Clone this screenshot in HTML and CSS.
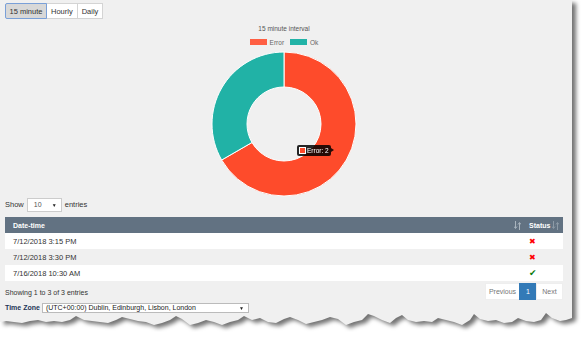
FILE: index.html
```html
<!DOCTYPE html>
<html>
<head>
<meta charset="utf-8">
<link rel="stylesheet" href="styles.css">
</head>
<body>
<div class="shadow">
  <div class="page">
    <div class="btn-group">
      <button class="btn active">15 minute</button><button class="btn">Hourly</button><button class="btn">Daily</button>
    </div>
    <div class="chart">
      <div class="chart-title">15 minute interval</div>
      <div class="legend">
        <span class="legend-item"><span class="swatch err"></span>Error</span>
        <span class="legend-item"><span class="swatch ok"></span>Ok</span>
      </div>
      <div class="donut-wrap">
        <svg class="donut" width="150" height="150" viewBox="0 0 150 150">
          <path d="M75,3 A72,72 0 1,1 12.65,111 L42.96,93.5 A37,37 0 1,0 75,38 Z" fill="#fe4b2b" stroke="#fff" stroke-width="1"/>
          <path d="M12.65,111 A72,72 0 0,1 75,3 L75,38 A37,37 0 0,0 42.96,93.5 Z" fill="#21b2a6" stroke="#fff" stroke-width="1"/>
        </svg>
        <div class="tooltip"><span class="tip-swatch"></span>Error: 2</div>
      </div>
    </div>
    <div class="length">Show <span class="select small">10<span class="arrow">▼</span></span> entries</div>
    <table class="grid">
      <thead>
        <tr><th class="c-date">Date-time<span class="sort">
          <svg width="7" height="9" viewBox="0 0 7 9"><path d="M1.5 0 V7 M0 5.5 L1.5 7.5 L3 5.5" stroke="#a9b4be" stroke-width="1" fill="none"/><path d="M5.5 9 V2 M4 3.5 L5.5 1.5 L7 3.5" stroke="#a9b4be" stroke-width="1" fill="none"/></svg></span></th>
          <th class="c-status">Status<span class="sort">
          <svg width="7" height="9" viewBox="0 0 7 9"><path d="M1.5 0 V7 M0 5.5 L1.5 7.5 L3 5.5" stroke="#8d9aa6" stroke-width="1" fill="none"/><path d="M5.5 9 V2 M4 3.5 L5.5 1.5 L7 3.5" stroke="#8d9aa6" stroke-width="1" fill="none"/></svg></span></th></tr>
      </thead>
      <tbody>
        <tr class="odd"><td>7/12/2018 3:15 PM</td><td class="st"><span class="x">✖</span></td></tr>
        <tr class="even"><td>7/12/2018 3:30 PM</td><td class="st"><span class="x">✖</span></td></tr>
        <tr class="odd"><td>7/16/2018 10:30 AM</td><td class="st"><span class="ck">✔</span></td></tr>
      </tbody>
    </table>
    <div class="footer">
      <div class="info">Showing 1 to 3 of 3 entries</div>
      <div class="paging"><span class="pg dis">Previous</span><span class="pg cur">1</span><span class="pg dis">Next</span></div>
    </div>
    <div class="tz"><b>Time Zone</b> <span class="select wide">(UTC+00:00) Dublin, Edinburgh, Lisbon, London<span class="arrow">▼</span></span></div>
  </div>
</div>
</body>
</html>
```
FILE: styles.css
```css
html, body { margin: 0; padding: 0; background: #fff; }
body { font-family: "Liberation Sans", Arial, sans-serif; color: #333; font-size: 8px; }
.shadow { width: 572px; filter: drop-shadow(4px 3px 2px rgba(0,0,0,0.55)); }
.page {
  width: 572px; height: 332px; box-sizing: border-box; padding: 3px 9px 0 5px;
  background: #f0f0f0;
  clip-path: polygon(0 0, 572px 0, 572px 318px, 566px 320px, 560px 321px, 552px 318px, 546px 313px, 541px 320px, 534px 322px, 526px 321px, 518px 318px, 512px 322px, 504px 323px, 496px 320px, 488px 321px, 480px 319px, 474px 314px, 470px 320px, 462px 325px, 454px 322px, 446px 320px, 438px 318px, 432px 322px, 424px 321px, 416px 322px, 408px 320px, 402px 315px, 396px 318px, 390px 323px, 382px 320px, 374px 316px, 368px 314px, 362px 320px, 354px 322px, 346px 325px, 338px 319px, 330px 317px, 322px 320px, 314px 322px, 306px 324px, 298px 320px, 290px 317px, 284px 319px, 276px 323px, 268px 322px, 260px 318px, 252px 320px, 244px 316px, 238px 320px, 230px 322px, 222px 325px, 214px 322px, 206px 320px, 198px 323px, 190px 325px, 182px 319px, 176px 316px, 170px 320px, 162px 323px, 154px 325px, 146px 322px, 138px 321px, 130px 319px, 122px 317px, 116px 320px, 108px 323px, 100px 322px, 92px 321px, 84px 320px, 76px 316px, 70px 320px, 62px 322px, 54px 321px, 46px 322px, 38px 320px, 30px 321px, 22px 323px, 14px 322px, 6px 321px, 0 322px);
}
.btn-group { display: flex; height: 16px; }
.btn {
  font: 7.5px "Liberation Sans", Arial, sans-serif; color: #333; background: #fff;
  border: 1px solid #d4d4d4; margin: 0 0 0 -1px; padding: 0 4px; height: 16px; box-sizing: border-box;
}
.btn:first-child { margin-left: 0; width: 42px; padding: 0; }
.btn.active { background: #d8d8d8; border-color: #7aa0d8; border-radius: 2px 0 0 2px; position: relative; z-index: 1; }
.chart { display: flex; flex-direction: column; align-items: center; width: 558px; }
.chart-title { font-size: 6.5px; color: #555; margin-top: 5px; height: 9px; line-height: 9px; }
.legend { display: flex; gap: 6px; margin-top: 5px; height: 8px; font-size: 6.5px; color: #666; line-height: 7px; }
.legend-item { display: flex; align-items: center; gap: 3px; }
.swatch { display: inline-block; width: 17px; height: 6px; }
.swatch.err { background: #ff5f43; }
.swatch.ok { background: #22b3a7; }
.donut-wrap { position: relative; width: 150px; height: 150px; margin-top: 3px; margin-bottom: -2px; }
.donut { display: block; }
.tooltip {
  position: absolute; left: 88px; top: 96px; height: 11px; padding: 0 2px 0 2px;
  background: rgba(0,0,0,0.85); color: #fff; border-radius: 2px; font-size: 6.5px; line-height: 11px;
  display: flex; align-items: center; gap: 1px;
}
.tooltip::after {
  content: ""; position: absolute; right: -3px; top: 3px; border-left: 3px solid rgba(0,0,0,0.85);
  border-top: 2.5px solid transparent; border-bottom: 2.5px solid transparent;
}
.tip-swatch { width: 5px; height: 5px; background: #fe4b2b; border: 1px solid #fff; }
.length { display: flex; align-items: center; gap: 3px; height: 15px; margin-top: 0; font-size: 7.5px; }
.select {
  position: relative; display: inline-flex; align-items: center; background: #fff; border: 1px solid #ccc;
  box-sizing: border-box; font-size: 7px; color: #555;
}
.select.small { width: 35px; height: 14px; padding-left: 6px; }
.select .arrow { position: absolute; right: 4px; font-size: 5px; color: #222; }
.grid { width: 558px; border-collapse: collapse; margin-top: 5px; font-size: 7.5px; }
.grid th { background: #627282; color: #fff; font-weight: bold; text-align: left; height: 16px; padding: 0 0 0 8px; position: relative; font-size: 7px; }
.grid th.c-status { width: 34px; padding-left: 4px; }
.sort { position: absolute; right: 4px; top: 4px; line-height: 0; }
.grid td { height: 16px; padding: 0 0 0 8px; }
.grid tr.odd td { background: #fff; }
.grid tr.even td { background: #f0f0f0; }
.grid td.st { padding: 0 0 0 4px; }
.x { color: #f00; font-size: 8px; font-family: "DejaVu Sans", sans-serif; }
.ck { color: #0a7a0a; font-size: 9px; font-family: "DejaVu Sans", sans-serif; }
.footer { display: flex; justify-content: space-between; width: 558px; margin-top: 2px; height: 17px; }
.info { font-size: 7px; color: #333; padding-top: 6px; }
.paging { display: flex; }
.pg { display: flex; align-items: center; justify-content: center; height: 17px; box-sizing: border-box; background: #fff; border: 1px solid #eee; margin-left: -1px; font-size: 7px; padding: 0 6px; color: #777; }
.pg.cur { background: #337ab7; border-color: #337ab7; color: #fff; width: 18px; padding: 0; }
.pg.dis:first-child { width: 35px; padding: 0; }
.pg.dis:last-child { width: 27px; padding: 0; }
.tz { display: flex; align-items: center; gap: 2px; margin-top: 2px; height: 11px; font-size: 7px; }
.tz b { color: #1d3557; }
.select.wide { width: 207px; height: 10px; padding-left: 3px; font-size: 7px; color: #222; border-color: #bbb; }
```
